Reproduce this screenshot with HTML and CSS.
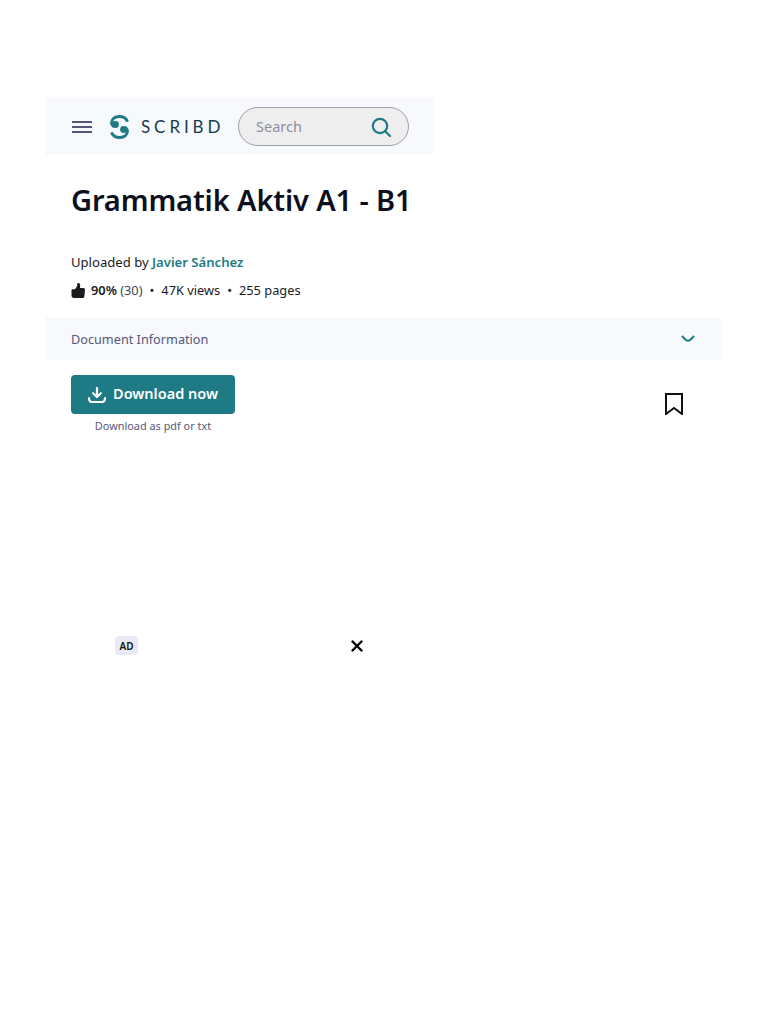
FILE: index.html
```html
<!DOCTYPE html>
<html lang="en">
<head>
    <meta charset="UTF-8">
    <meta name="viewport" content="width=device-width, initial-scale=1.0">
    <title>Grammatik Aktiv A1 - B1</title>
    <link rel="stylesheet" href="styles.css">
</head>
<body>

<div class="page">
    <!-- Header -->
    <header class="top-bar">
        <svg class="menu-icon" width="22" height="14" viewBox="0 0 22 14" aria-hidden="true">
            <path d="M1 2h20M1 7h20M1 12h20" stroke="#55587a" stroke-width="1.8" fill="none"/>
        </svg>
        <svg class="logo-mark" width="21" height="24" viewBox="0 0 21 24" aria-hidden="true">
            <path d="M18 5.500C16.500 2.800 13.500 1.400 10 1.600 6 1.800 2.800 4 2.600 7.500c-.1 1.500.5 2.800 1.600 3.600" fill="none" stroke="#1e7b85" stroke-width="3" stroke-linecap="round"/>
            <path d="M3 18.500c1.500 2.700 4.500 4.100 8 3.900 4-.2 7.200-2.400 7.400-5.900.1-1.500-.5-2.800-1.600-3.600" fill="none" stroke="#1e7b85" stroke-width="3" stroke-linecap="round"/>
            <circle cx="6.500" cy="9.500" r="3.400" fill="#1e7b85"/>
            <circle cx="14.500" cy="14.500" r="3.400" fill="#1e7b85"/>
        </svg>
        <span class="logo-text">SCRIBD</span>
        <div class="search-box">
            <span class="search-text">Search</span>
            <svg width="20" height="20" viewBox="0 0 20 20" aria-hidden="true">
                <circle cx="9" cy="9" r="7.200" fill="none" stroke="#1e7b85" stroke-width="2.200"/>
                <path d="M14.200 14.200 19 19" stroke="#1e7b85" stroke-width="2.200" stroke-linecap="round"/>
            </svg>
        </div>
    </header>

    <div class="doc-head">
        <h1>Grammatik Aktiv A1 - B1</h1>
        <p class="uploaded">Uploaded by <a href="#">Javier Sánchez</a></p>
        <div class="stats">
            <svg width="14" height="15" viewBox="0 0 14 15" aria-hidden="true">
                <path d="M.5 7.500C.5 6.800 1 6.300 1.700 6.300H4L6.200 3V1c0-.6.500-1 1-1C8.600 0 9.400 1.300 9.200 2.800L9 5h3.300C13.300 5 14 5.800 14 6.800l-.6 6.400c-.1 1-.9 1.800-1.900 1.800H3c-1.500 0-2.500-1-2.500-2.500z" fill="#1a1a1f"/>
            </svg>
            <span><b>90%</b> <span class="count">(30)</span></span>
            <span class="dot">•</span>
            <span>47K views</span>
            <span class="dot">•</span>
            <span>255 pages</span>
        </div>
    </div>

    <div class="info-bar">
        <span>Document Information</span>
        <svg width="14" height="8" viewBox="0 0 14 8" aria-hidden="true">
            <path d="M1.500 1.500C4 4.500 5.500 5.800 7 5.800s3-1.300 5.500-4.300" fill="none" stroke="#1e7b85" stroke-width="2" stroke-linecap="round"/>
        </svg>
    </div>

    <div class="actions">
        <div class="download">
            <a class="download-btn" href="#">
                <svg width="18" height="16" viewBox="0 0 18 16" aria-hidden="true">
                    <path d="M9 1v8.500M5.200 6.200 9 10l3.800-3.800M1 11c0 2.500 1 4 3 4h10c2 0 3-1.500 3-4" fill="none" stroke="#fff" stroke-width="2.200" stroke-linecap="round" stroke-linejoin="round"/>
                </svg>
                <span class="download-label">Download now</span>
            </a>
            <div class="download-note">Download as pdf or txt</div>
        </div>
        <svg class="bookmark" width="18" height="22" viewBox="0 0 18 22" aria-hidden="true">
            <path d="M1 1h16v20l-8-6-8 6z" fill="none" stroke="#111" stroke-width="2"/>
        </svg>
    </div>

    <div class="ad-row">
        <span class="ad-badge">AD</span>
        <svg width="12" height="12" viewBox="0 0 12 12" aria-hidden="true">
            <path d="M1.500 1.500l9 9M10.500 1.500l-9 9" stroke="#000" stroke-width="2.400" stroke-linecap="round"/>
        </svg>
    </div>
</div>

</body>
</html>
```
FILE: styles.css
```css
body {
    font-family: "Noto Sans", Arial, sans-serif;
    margin: 0;
    padding: 0;
    background-color: #fff;
    color: #1a1a1f;
}

a {
    text-decoration: none;
}

.page {
    width: 675px;
    margin-left: 46px;
    padding-top: 98px;
}

/* Header */
.top-bar {
    width: 387px;
    height: 57px;
    box-sizing: border-box;
    padding-left: 25px;
    display: flex;
    align-items: center;
    background-color: #f8f9fd;
}

.logo-mark {
    margin-left: 16px;
}

.logo-text {
    width: 80px;
    margin-left: 11px;
    font-family: "Lato", sans-serif;
    font-size: 17px;
    letter-spacing: 3.9px;
    white-space: nowrap;
    color: #143c4c;
}

.search-box {
    width: 171px;
    height: 39px;
    margin-left: 17px;
    box-sizing: border-box;
    padding: 0 17px;
    display: flex;
    align-items: center;
    justify-content: space-between;
    background-color: #eeeeef;
    border: 1px solid #9c9eb0;
    border-radius: 20px;
}

.search-text {
    padding-bottom: 1px;
    font-size: 14.5px;
    color: #8c8e9e;
}

/* Title and stats */
.doc-head {
    padding-left: 25px;
}

h1 {
    margin: 26px 0 0;
    font-size: 29px;
    line-height: 38px;
    font-weight: 600;
    color: #0c0f1e;
    letter-spacing: -0.12px;
}

.uploaded {
    margin: 33px 0 0;
    font-size: 13.1px;
    line-height: 20px;
}

.uploaded a {
    color: #1e7b85;
    font-weight: 600;
}

.stats {
    margin-top: 8px;
    height: 20px;
    display: flex;
    align-items: center;
    gap: 6px;
    font-size: 12.8px;
}

.stats b {
    font-weight: 600;
}

.count {
    color: #44465a;
}

.dot {
    margin: 0 1px;
}

/* Document information */
.info-bar {
    margin-top: 17px;
    height: 43px;
    box-sizing: border-box;
    padding: 0 26px 0 25px;
    display: flex;
    align-items: center;
    justify-content: space-between;
    background-color: #f8f9fd;
    color: #55587a;
    font-size: 12.7px;
}

/* Download */
.actions {
    margin-top: 15px;
    padding: 0 38px 0 25px;
    display: flex;
    justify-content: space-between;
    align-items: flex-start;
}

.download-btn {
    width: 164px;
    height: 39px;
    display: flex;
    align-items: center;
    justify-content: center;
    gap: 7px;
    background-color: #1e7b85;
    border-radius: 4px;
    color: #fff;
    font-size: 14.5px;
    font-weight: 600;
}

.download-label {
    padding-bottom: 3px;
}

.download-note {
    margin-top: 4px;
    text-align: center;
    font-size: 10.9px;
    line-height: 15px;
    color: #55587a;
}

.bookmark {
    margin-top: 18px;
}

/* Ad label */
.ad-row {
    width: 248px;
    margin: 203px 0 0 69px;
    display: flex;
    align-items: center;
    justify-content: space-between;
}

.ad-badge {
    width: 23px;
    height: 19px;
    display: flex;
    align-items: center;
    justify-content: center;
    background-color: #e9eaf4;
    border-radius: 4px;
    font-size: 10px;
    font-weight: 600;
    color: #111;
}
```
